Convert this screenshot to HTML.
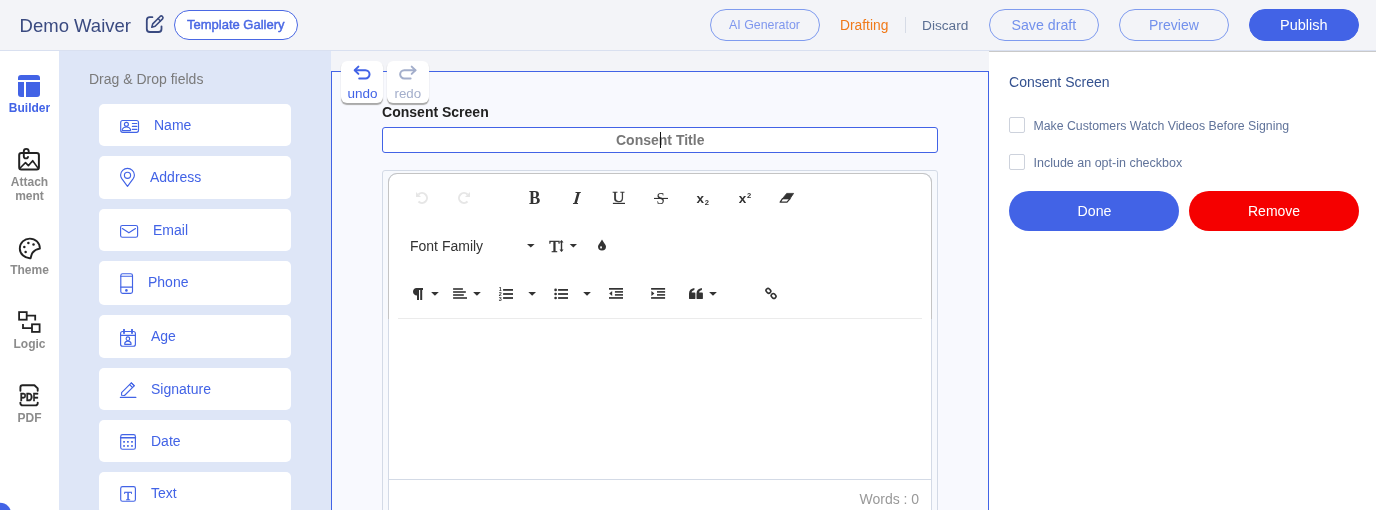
<!DOCTYPE html>
<html><head><meta charset="utf-8">
<style>
*{box-sizing:border-box;margin:0;padding:0}
html,body{width:1376px;height:510px;overflow:hidden}
body{position:relative;background:#f3f4f8;font-family:"Liberation Sans",sans-serif;color:#333}
.a{position:absolute}
.t{position:absolute;white-space:nowrap;line-height:1}
#ov{position:absolute;left:0;top:0;width:1376px;height:510px;overflow:hidden}
#hdr{left:0;top:0;width:1376px;height:51px;background:#f3f4f8;border-bottom:1px solid #d9e0f0}
.btn{position:absolute;top:9px;height:32px;width:110px;border-radius:16px;border:1px solid #7f9bef;background:transparent}
#side{left:0;top:51px;width:59px;height:459px;background:#fff}
.sl{position:absolute;left:0;width:59px;text-align:center;font-weight:bold;font-size:12px;color:#8c8c8c;line-height:14px;white-space:nowrap}
#panel{left:59px;top:51px;width:272px;height:459px;background:#dee6f7}
.card{position:absolute;left:99px;width:192px;height:42px;background:#fff;border-radius:5px}
.cl{position:absolute;font-size:14px;color:#4263e6;white-space:nowrap;line-height:1}
#canvas{left:331px;top:71px;width:658px;height:460px;background:#f8f9fe;border:1px solid #4263e6}
#rp{left:989px;top:51px;width:387px;height:459px;background:#fff;border-top:1px solid #c9c9c9}
.ub{position:absolute;top:61px;width:42px;height:41.5px;background:#fff;border-radius:6px;box-shadow:0 1.5px 1px #a9a9a9}
.cb{position:absolute;left:1009px;width:16px;height:16px;border:1px solid #cdd2dc;border-radius:2px;background:#fff}
</style></head><body><div style="position:absolute;left:0;top:0;width:1376px;height:510px;will-change:transform">

<!-- HEADER -->
<div id="hdr" class="a"></div>
<div class="t" style="left:19.6px;top:17px;font-size:18.5px;color:#3a4a80">Demo Waiver</div>

<div class="a" style="left:174px;top:10px;width:124px;height:30px;border-radius:15px;border:1px solid #4a68e4;background:#fff"></div>
<div class="t" style="left:187px;top:18.3px;font-size:13px;color:#4a68e4;-webkit-text-stroke:0.45px #4a68e4">Template Gallery</div>

<div class="btn" style="left:710px"></div>
<div class="t" style="left:729px;top:18.5px;font-size:12.4px;color:#7f97ee">AI Generator</div>
<div class="t" style="left:840px;top:19px;font-size:13.8px;color:#f07a1a">Drafting</div>
<div class="a" style="left:905px;top:17px;width:1px;height:16px;background:#d6dbe6"></div>
<div class="t" style="left:922px;top:18.8px;font-size:13.7px;color:#5b6f93">Discard</div>
<div class="btn" style="left:989px"></div>
<div class="t" style="left:1011.5px;top:18px;font-size:14.2px;color:#7391ec">Save draft</div>
<div class="btn" style="left:1119px"></div>
<div class="t" style="left:1149px;top:18px;font-size:14px;color:#7391ec">Preview</div>
<div class="btn" style="left:1249px;background:#4263e6;border-color:#4263e6"></div>
<div class="t" style="left:1280px;top:17.7px;font-size:14.5px;color:#fff">Publish</div>

<!-- LEFT SIDEBAR -->
<div id="side" class="a"></div>
<div class="sl" style="top:100.5px;color:#4263e6">Builder</div>
<div class="sl" style="top:174.5px">Attach<br>ment</div>
<div class="sl" style="top:262.5px">Theme</div>
<div class="sl" style="top:336.5px">Logic</div>
<div class="sl" style="top:410.5px">PDF</div>

<div id="panel" class="a"></div>
<div class="t" style="left:89px;top:72px;font-size:14px;color:#7a7a7a">Drag &amp; Drop fields</div>
<div class="card" style="top:104px"></div>
<div class="card" style="top:156px;height:43px"></div>
<div class="card" style="top:209px"></div>
<div class="card" style="top:261px;height:44px"></div>
<div class="card" style="top:315px;height:43px"></div>
<div class="card" style="top:368px"></div>
<div class="card" style="top:420px"></div>
<div class="card" style="top:472px"></div>
<div class="cl" style="left:154px;top:118.3px">Name</div>
<div class="cl" style="left:150px;top:170.2px">Address</div>
<div class="cl" style="left:153px;top:223.2px">Email</div>
<div class="cl" style="left:148px;top:275.2px">Phone</div>
<div class="cl" style="left:151px;top:329.4px">Age</div>
<div class="cl" style="left:151px;top:381.6px">Signature</div>
<div class="cl" style="left:151px;top:433.8px">Date</div>
<div class="cl" style="left:151px;top:486.1px">Text</div>

<!-- CANVAS -->
<div id="canvas" class="a"></div>
<div class="ub" style="left:341px"></div>
<div class="ub" style="left:387px"></div>
<div class="t" style="left:347.5px;top:87.4px;font-size:13.5px;color:#4263e6">undo</div>
<div class="t" style="left:394.5px;top:87.4px;font-size:13.3px;color:#a3aecb">redo</div>

<div class="t" style="left:382.1px;top:105.2px;font-size:14px;font-weight:bold;color:#222">Consent Screen</div>
<div class="a" style="left:382px;top:127px;width:556px;height:26px;border:1px solid #4263e6;border-radius:3px;background:#fff"></div>
<div class="t" style="left:616px;top:132.6px;font-size:14px;font-weight:bold;color:#777">Consent Title</div>
<div class="a" style="left:660px;top:132px;width:1px;height:16px;background:#111"></div>

<div class="a" style="left:382px;top:170px;width:556px;height:360px;border:1px solid #d3dae6;border-radius:3px;background:#f7f9fd"></div>
<div class="a" style="left:388px;top:173px;width:544px;height:360px;border:1px solid #d3dae6;border-radius:9px 9px 0 0;background:#fff"></div>
<div class="a" style="left:388px;top:173px;width:544px;height:146px;border:1px solid #c4c4c4;border-bottom:none;border-radius:9px 9px 0 0"></div>
<div class="a" style="left:398px;top:318px;width:524px;height:1px;background:#ebebeb"></div>
<div class="a" style="left:389px;top:479px;width:542px;height:1px;background:#d3dae6"></div>
<div class="t" style="left:859.5px;top:492.2px;font-size:14px;color:#999">Words : 0</div>

<div class="t" style="left:410px;top:239.1px;font-size:14px;color:#333">Font Family</div>


<!-- RIGHT PANEL -->
<div id="rp" class="a"></div>
<div class="t" style="left:1009.1px;top:75.1px;font-size:14px;color:#34518f">Consent Screen</div>
<div class="cb" style="top:117px"></div>
<div class="t" style="left:1033.5px;top:119.6px;font-size:12.3px;color:#60739a">Make Customers Watch Videos Before Signing</div>
<div class="cb" style="top:154px"></div>
<div class="t" style="left:1033.5px;top:156.5px;font-size:12.5px;color:#60739a">Include an opt-in checkbox</div>
<div class="a" style="left:1009px;top:191px;width:170px;height:40px;border-radius:20px;background:#4263e6"></div>
<div class="a" style="left:1189px;top:191px;width:170px;height:40px;border-radius:20px;background:#f50000"></div>
<div class="t" style="left:1077.5px;top:204.3px;font-size:14.2px;color:#fff">Done</div>
<div class="t" style="left:1248px;top:204.3px;font-size:14px;color:#fff">Remove</div>

<!-- ICON OVERLAY -->
<svg id="ov" viewBox="0 0 1376 510">
 <!-- header edit icon -->
 <g fill="none" stroke="#3a4a80" stroke-width="1.8" stroke-linecap="round" stroke-linejoin="round">
  <path d="M152.4 17.2 H149.8 a3 3 0 0 0 -3 3 V29 a3 3 0 0 0 3 3 H158.5 a3 3 0 0 0 3 -3 V26.3"/>
  <path d="M151.8 27.2 L152.72 23.88 L160.15 16.45 A1.7 1.7 0 0 1 162.55 18.85 L155.12 26.28 Z" stroke-width="1.6"/>
  <path d="M158.02 18.58 L160.42 20.98" stroke-width="1.4"/>
 </g>
 <!-- builder icon -->
 <g fill="#4263e6">
  <path d="M18 78 a3 3 0 0 1 3 -3 H37 a3 3 0 0 1 3 3 V80 H18 Z"/>
  <path d="M18 82 H24 V97 H21 a3 3 0 0 1 -3 -3 Z"/>
  <path d="M26 82 H40 V94 a3 3 0 0 1 -3 3 H26 Z"/>
 </g>
 <!-- attachment -->
 <g fill="none" stroke="#222" stroke-width="2" stroke-linejoin="round" stroke-linecap="round">
  <rect x="19.2" y="152.9" width="19.7" height="16.6" rx="2.2"/>
  <path d="M19.9 168.2 L25.5 162.6 L28.4 165.6 L32.7 160.7 L38.2 168.4" stroke-width="1.6"/>
  <path d="M28.7 152.6 V151.3 a2.45 2.45 0 0 0 -4.9 0 V156.2 a2.15 2.15 0 0 0 4.3 0" stroke-width="1.9" stroke-linecap="butt"/>
 </g>
 <!-- theme palette -->
 <g fill="none" stroke="#222" stroke-width="1.9" stroke-linejoin="round">
  <path d="M30.6 258.2 C25 258.6 19.8 254 19.8 248.4 C19.8 242.8 24.4 238.6 29.8 238.6 C35.4 238.6 39.9 242.8 39.9 248.6 C36.6 249 34.4 250 32.6 252.6 C31.6 254 31.2 256 30.6 258.2 Z"/>
 </g>
 <g fill="#222">
  <circle cx="28.4" cy="242.9" r="1.25"/><circle cx="33.5" cy="244.4" r="1.25"/>
  <circle cx="24.3" cy="246.9" r="1.25"/><circle cx="25.6" cy="251.9" r="1.25"/>
 </g>
 <!-- logic -->
 <g fill="none" stroke="#222" stroke-width="1.8">
  <rect x="19.1" y="312.1" width="7.6" height="7.6"/>
  <rect x="32" y="324.3" width="7.6" height="7.6"/>
  <path d="M26.7 315.6 H35.2 V320.4"/>
  <path d="M23 324 V328.1 H32"/>
 </g>
 <!-- pdf -->
 <g fill="none" stroke="#222" stroke-width="1.9" stroke-linecap="round" stroke-linejoin="round">
  <path d="M20.4 390.8 V387.4 a2.2 2.2 0 0 1 2.2 -2.2 H34.4 L37.7 388.4 V390.8"/>
  <path d="M20.4 402.6 V403.2 a2.2 2.2 0 0 0 2.2 2.2 H35.5 a2.2 2.2 0 0 0 2.2 -2.2 V402.6"/>
 </g>
 <text x="29.1" y="400.6" text-anchor="middle" font-family="Liberation Sans" font-weight="bold" font-size="10.3" fill="#222" stroke="#222" stroke-width="0.45" textLength="18.4" lengthAdjust="spacingAndGlyphs">PDF</text>

 <!-- card icons -->
 <g fill="none" stroke="#4263e6" stroke-width="1.15" stroke-linecap="round" stroke-linejoin="round">
  <rect x="120.7" y="120.5" width="17.8" height="11.8" rx="2"/>
  <circle cx="126.4" cy="124.3" r="2"/>
  <path d="M122.8 130.6 c-0.6 0 -0.8 -0.5 -0.6 -1 c0.6 -1.6 2.2 -2.6 4.2 -2.6 s3.6 1 4.2 2.6 c0.2 0.5 0 1 -0.6 1 z"/>
  <path d="M132.4 123.5 h4.4 M132.4 126.4 h4.4 M132.4 129.4 h4.4" stroke-width="1.2"/>

  <path d="M127.5 186.3 L121.8 178.6 C120.9 177.3 120.6 176.1 120.6 175 C120.6 171.3 123.7 168.4 127.5 168.4 C131.3 168.4 134.4 171.3 134.4 175 C134.4 176.1 134.1 177.3 133.2 178.6 Z"/>
  <circle cx="127.5" cy="175.3" r="3.1"/>

  <rect x="120.6" y="225.5" width="17" height="11.7" rx="1.8"/>
  <path d="M122.3 228.5 L128.9 232.8 L135.5 228.5"/>

  <rect x="120.8" y="273.7" width="11.7" height="19.6" rx="1.8"/>
  <path d="M120.8 276.2 H132.5 M120.8 287.1 H132.5"/>

  <rect x="120.6" y="331.5" width="14.8" height="14.7" rx="2"/>
  <path d="M120.6 335.3 H135.4"/>
  <circle cx="127.9" cy="338.7" r="1.8"/>
  <path d="M124.7 344.3 c0 -1.9 1.4 -3.1 3.2 -3.1 s3.2 1.2 3.2 3.1 z"/>

  <path d="M120.4 397.4 H135.8" stroke-width="1.3"/>
  <path d="M121.6 395.3 L121.6 392.6 L131.3 382.9 L134.2 385.8 L124.5 395.5 Z"/>
  <path d="M129.6 384.6 L132.5 387.5 M131.4 382.8 L134.3 385.7"/>

  <rect x="120.7" y="434.6" width="14.7" height="14.6" rx="1.8"/>
  <path d="M120.7 437.7 H135.4" stroke-width="1.6"/>

  <rect x="120.7" y="486.6" width="14.7" height="14.6" rx="1.8"/>
 </g>
 <g fill="#4263e6">
  <circle cx="126.4" cy="290.4" r="1.3"/>
  <rect x="123.2" y="441" width="1.7" height="1.7"/><rect x="127.05" y="441" width="1.7" height="1.7"/><rect x="131.15" y="441" width="1.7" height="1.7"/>
  <rect x="123.2" y="445.1" width="1.7" height="1.7"/><rect x="127.05" y="445.1" width="1.7" height="1.7"/><rect x="131.15" y="445.1" width="1.7" height="1.7"/>
  <rect x="123.1" y="329" width="1.8" height="4.8"/><rect x="131.1" y="329" width="1.8" height="4.8"/>
 </g>
 <text x="0" y="0" text-anchor="middle" font-family="Liberation Serif" font-size="13.3" fill="#4263e6" stroke="#4263e6" stroke-width="0.35" transform="translate(128 499.6) scale(0.95 1)">T</text>

 <!-- undo/redo arrows -->
 <g fill="none" stroke-width="1.7" stroke-linecap="round" stroke-linejoin="round">
  <path d="M355.5 70.2 H365.4 a4.15 4.15 0 0 1 0 8.3 H359.2" stroke="#4263e6" stroke-width="2"/>
  <path d="M358.4 66.6 L354.7 70.2 L358.4 73.9" stroke="#4263e6" stroke-width="2"/>
  <path d="M415.4 70.2 H404.3 a4.15 4.15 0 0 0 0 8.3 H410.6" stroke="#a3aecb" stroke-width="2"/>
  <path d="M411.7 66.6 L415.4 70.2 L411.7 73.9" stroke="#a3aecb" stroke-width="2"/>
 </g>

 <!-- editor toolbar -->
 <g fill="none" stroke="#e6e6e6" stroke-width="2">
  <path d="M418.46 194.46 A5 5 0 1 1 418.46 201.54"/>
  <path d="M467.54 194.46 A5 5 0 1 0 467.54 201.54"/>
 </g>
 <g fill="#e6e6e6">
  <path d="M416 192 V197 H421 Z"/>
  <path d="M470 192 V197 H465 Z"/>
 </g>
 <g fill="#333" font-family="Liberation Serif">
  <text x="0" y="0" font-weight="bold" font-size="17.8" transform="translate(529 203.7) scale(0.95 1)">B</text>
  <text x="0" y="0" font-size="15" stroke="#333" stroke-width="0.35" transform="translate(612.6 201.8) scale(1.12 1)">U</text>
  <text x="0" y="0" font-size="17.3" transform="translate(656.6 203.8) scale(0.86 1)">S</text>
 </g>
 <path fill="#333" d="M575.6 191.9 H580.9 L580.7 193 H579.7 L576.9 203 H578.1 L577.9 204 H572.9 L573.1 203 H574.3 L577.1 193 H575.4 Z"/>
 <g fill="#333">
  <rect x="612.9" y="202.8" width="12.1" height="1.2"/>
  <rect x="654" y="197.9" width="14" height="1.1"/>
 </g>
 <g fill="#333" font-family="Liberation Sans" font-weight="bold">
  <text x="696.5" y="203.1" font-size="13.5">x</text>
  <text x="704.8" y="204.9" font-size="7.6">2</text>
  <text x="738.7" y="203.1" font-size="13.5">x</text>
  <text x="746.9" y="198" font-size="7.6">2</text>
 </g>
 <path d="M786.7 193.4 H793.6 L790.1 198.6 H782.5 Z" fill="#333" stroke="#333" stroke-width="0.8" stroke-linejoin="round"/>
 <path d="M782.5 198.6 H790.1 L787 202.2 H780.2 Z" fill="none" stroke="#333" stroke-width="1.3" stroke-linejoin="round"/>

 <g fill="#333">
  <path d="M527 244 H534.6 L530.8 247.6 Z"/>
  <path d="M569.7 244 H577 L573.35 247.6 Z"/>
  <path d="M431.1 292 H438.8 L434.95 295.8 Z"/>
  <path d="M473.1 292 H480.8 L476.95 295.8 Z"/>
  <path d="M528.3 292 H536 L532.15 295.8 Z"/>
  <path d="M583.2 292 H590.9 L587.05 295.8 Z"/>
  <path d="M709.1 292 H716.9 L713 295.8 Z"/>
 </g>
 <text x="0" y="0" font-family="Liberation Serif" font-size="17.6" fill="#333" stroke="#333" stroke-width="0.45" transform="translate(549.3 252) scale(0.97 1)">T</text>
 <g fill="none" stroke="#333" stroke-width="1.4"><path d="M561.5 240.8 V251.2"/></g>
 <g fill="#333"><path d="M559.5 242.6 L561.5 240 L563.5 242.6 Z"/><path d="M559.5 249.4 L561.5 252 L563.5 249.4 Z"/></g>
 <path d="M602 239.4 C600.6 242.2 598 244.6 598 246.6 A4 4 0 0 0 606 246.6 C606 244.6 603.4 242.2 602 239.4 Z" fill="#333"/>
 <rect x="600.2" y="246.4" width="1.7" height="2" fill="#fff"/>

 <g fill="#333">
  <path d="M416.5 288 H423 V290 H422.2 V300 H420.2 V290 H419 V300 H417 V295.6 C414.6 295.4 413 293.8 413 291.8 C413 289.6 414.6 288 416.5 288 Z"/>
  <rect x="453.1" y="288.2" width="9.8" height="1.6"/>
  <rect x="453.1" y="291.2" width="12.7" height="1.6"/>
  <rect x="453.1" y="294.2" width="10.7" height="1.6"/>
  <rect x="453.1" y="297.2" width="13.9" height="1.6"/>
  <rect x="503.1" y="289" width="9.9" height="1.8"/>
  <rect x="503.1" y="293.1" width="9.9" height="1.8"/>
  <rect x="503.1" y="297.1" width="9.9" height="1.8"/>
  <rect x="558.1" y="289" width="9.9" height="1.8"/>
  <rect x="558.1" y="293.1" width="9.9" height="1.8"/>
  <rect x="558.1" y="297.1" width="9.9" height="1.8"/>
  <circle cx="555.6" cy="289.9" r="1.35"/><circle cx="555.6" cy="294" r="1.35"/><circle cx="555.6" cy="298" r="1.35"/>
  <rect x="609" y="288" width="14" height="1.7"/>
  <rect x="614.9" y="291.1" width="8.1" height="1.6"/>
  <rect x="614.9" y="294.1" width="8.1" height="1.6"/>
  <rect x="609" y="297.1" width="14" height="1.7"/>
  <path d="M612.2 291 V296 L609.2 293.5 Z"/>
  <rect x="651.1" y="288" width="14" height="1.7"/>
  <rect x="657" y="291.1" width="8.1" height="1.6"/>
  <rect x="657" y="294.1" width="8.1" height="1.6"/>
  <rect x="651.1" y="297.1" width="14" height="1.7"/>
  <path d="M651.4 291 V296 L654.4 293.5 Z"/>
  <path d="M689 298.2 V293.8 C689 290.6 690.8 288.6 694.4 288.1 V290.1 C692.6 290.5 691.7 291.5 691.6 292.6 H694.5 a0.9 0.9 0 0 1 0.9 0.9 V298.2 a0.9 0.9 0 0 1 -0.9 0.9 H689.9 a0.9 0.9 0 0 1 -0.9 -0.9 Z"/>
  <path d="M696.5 298.2 V293.8 C696.5 290.6 698.3 288.6 701.9 288.1 V290.1 C700.1 290.5 699.2 291.5 699.1 292.6 H702 a0.9 0.9 0 0 1 0.9 0.9 V298.2 a0.9 0.9 0 0 1 -0.9 0.9 H697.4 a0.9 0.9 0 0 1 -0.9 -0.9 Z"/>
 </g>
 <g fill="#333" font-family="Liberation Sans" font-weight="bold" font-size="5.4">
  <text x="498.8" y="290.8">1</text><text x="498.8" y="295.9">2</text><text x="498.8" y="301">3</text>
 </g>
 <g fill="none" stroke="#333" stroke-width="1.6">
  <rect x="-2" y="-2.5" width="4" height="5" rx="1.9" transform="translate(768.4 290.8) rotate(-45)"/>
  <rect x="-2" y="-2.5" width="4" height="5" rx="1.9" transform="translate(773.6 296) rotate(-45)"/>
 </g>
 <circle cx="0" cy="514" r="11.2" fill="#4263e6"/>
</svg>
</div></body></html>
